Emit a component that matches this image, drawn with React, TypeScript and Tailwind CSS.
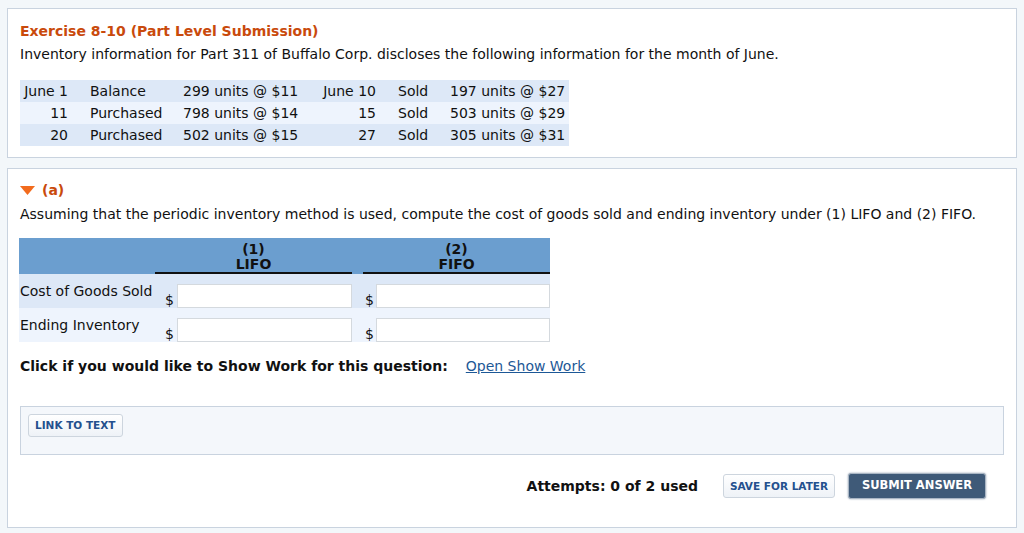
import React from 'react';

// ==== Data ==== //

const inventoryRows = [
    ['June 1', 'Balance', '299 units @ $11', 'June 10', 'Sold', '197 units @ $27'],
    ['11', 'Purchased', '798 units @ $14', '15', 'Sold', '503 units @ $29'],
    ['20', 'Purchased', '502 units @ $15', '27', 'Sold', '305 units @ $31'],
];

const answerRows = ['Cost of Goods Sold', 'Ending Inventory'];

// ==== Pieces ==== //

const InventoryTable: React.FC = () => (
    <div className="w-[549px] mt-[17px]">
        {inventoryRows.map((r, i) => (
            <div key={i} className={`flex h-[22px] items-center whitespace-nowrap ${i === 1 ? 'bg-[#eef4fd]' : 'bg-[#dde8f7]'}`}>
                <div className="w-[70px] pr-[22px] text-right">{r[0]}</div>
                <div className="w-[93px]">{r[1]}</div>
                <div className="w-[117px]">{r[2]}</div>
                <div className="w-[98px] pr-[22px] text-right">{r[3]}</div>
                <div className="w-[52px]">{r[4]}</div>
                <div className="w-[119px]">{r[5]}</div>
            </div>
        ))}
    </div>
);

const AnswerTable: React.FC = () => (
    <div className="w-[531px] mt-[15px] ml-[-1px]">
        <div className="flex h-[36px] bg-[#6b9ecf] font-bold text-[#111] leading-[15px]">
            <div className="w-[136px]" />
            <div className="w-[197px] border-b-2 border-[#111] pt-[4px] text-center">
                <div>(1)</div>
                <div>LIFO</div>
            </div>
            <div className="w-[11px]" />
            <div className="w-[187px] border-b-2 border-[#111] pt-[4px] text-center">
                <div>(2)</div>
                <div>FIFO</div>
            </div>
        </div>
        {answerRows.map((label, i) => (
            <div key={label} className={`flex h-[34px] ${i === 0 ? 'bg-[#dde8f7]' : 'bg-[#eef4fd]'}`}>
                <div className="w-[136px] pl-[1px] pt-[8px] whitespace-nowrap">{label}</div>
                <div className="w-[197px] pt-[9px] pl-[10px] flex items-end">
                    <span className="leading-[16px]">$</span>
                    <input className="ml-[3px] w-[175px] h-[24px] bg-white border border-[#d4d9de] outline-none" />
                </div>
                <div className="w-[11px]" />
                <div className="w-[187px] pt-[9px] pl-[2px] flex items-end">
                    <span className="leading-[16px]">$</span>
                    <input className="ml-[2px] w-[174px] h-[24px] bg-white border border-[#d4d9de] outline-none" />
                </div>
            </div>
        ))}
    </div>
);

// ==== Main App Component ==== //

const App: React.FC = () => {
    return (
        <div
            className="min-h-screen bg-[#f3f7fa] pt-[8px] px-[7px] text-[14px] leading-[18px] text-[#111]"
            style={{ fontFamily: '"DejaVu Sans", Verdana, sans-serif' }}
        >
            <section className="w-[1010px] bg-white border border-[#c9d3df] pl-[12px] pt-[13px] pb-[11px]">
                <h1 className="font-bold text-[#c94a0c]">Exercise 8-10 (Part Level Submission)</h1>
                <p className="mt-[5px]">
                    Inventory information for Part 311 of Buffalo Corp. discloses the following information for the month of June.
                </p>
                <InventoryTable />
            </section>

            <section className="w-[1010px] mt-[10px] h-[360px] bg-white border border-[#c9d3df] pl-[12px] pr-[12px] pt-[12px]">
                <div className="flex items-center font-bold text-[#c94a0c]">
                    <svg width="15" height="9" viewBox="0 0 15 9" className="mr-[7px] mt-[1px]">
                        <polygon points="0,0 15,0 7.5,9" fill="#f26b1d" />
                    </svg>
                    (a)
                </div>
                <p className="mt-[6px]">
                    Assuming that the periodic inventory method is used, compute the cost of goods sold and ending inventory under (1) LIFO and (2) FIFO.
                </p>
                <AnswerTable />
                <div className="mt-[15px] flex">
                    <span className="font-bold">Click if you would like to Show Work for this question:</span>
                    <a href="#" className="ml-[18px] text-[#1d5896] underline">Open Show Work</a>
                </div>

                <div className="mt-[31px] h-[49px] bg-[#f4f7fb] border border-[#c9d3df] pl-[7px] pt-[7px]">
                    <button className="h-[23px] px-[6px] rounded-[3px] border border-[#cdd5de] bg-gradient-to-b from-white to-[#eef2f7] text-[10.5px] font-bold text-[#24508e] leading-none">
                        LINK TO TEXT
                    </button>
                </div>

                <div className="mt-[18px] flex items-center justify-end pr-[18px]">
                    <span className="font-bold text-[14px] mr-[25px]">Attempts: 0 of 2 used</span>
                    <button className="h-[24px] w-[112px] rounded-[3px] border border-[#cdd5de] bg-gradient-to-b from-white to-[#eef2f7] text-[10.5px] font-bold text-[#24508e] leading-none">
                        SAVE FOR LATER
                    </button>
                    <button className="ml-[13px] h-[26px] w-[138px] rounded-[3px] border border-[#aab6c4] bg-[#3f5a78] text-[11.5px] font-bold text-white leading-none shadow-[0_0_2px_#8a9aab]">
                        SUBMIT ANSWER
                    </button>
                </div>
            </section>
        </div>
    );
};

export default App;
